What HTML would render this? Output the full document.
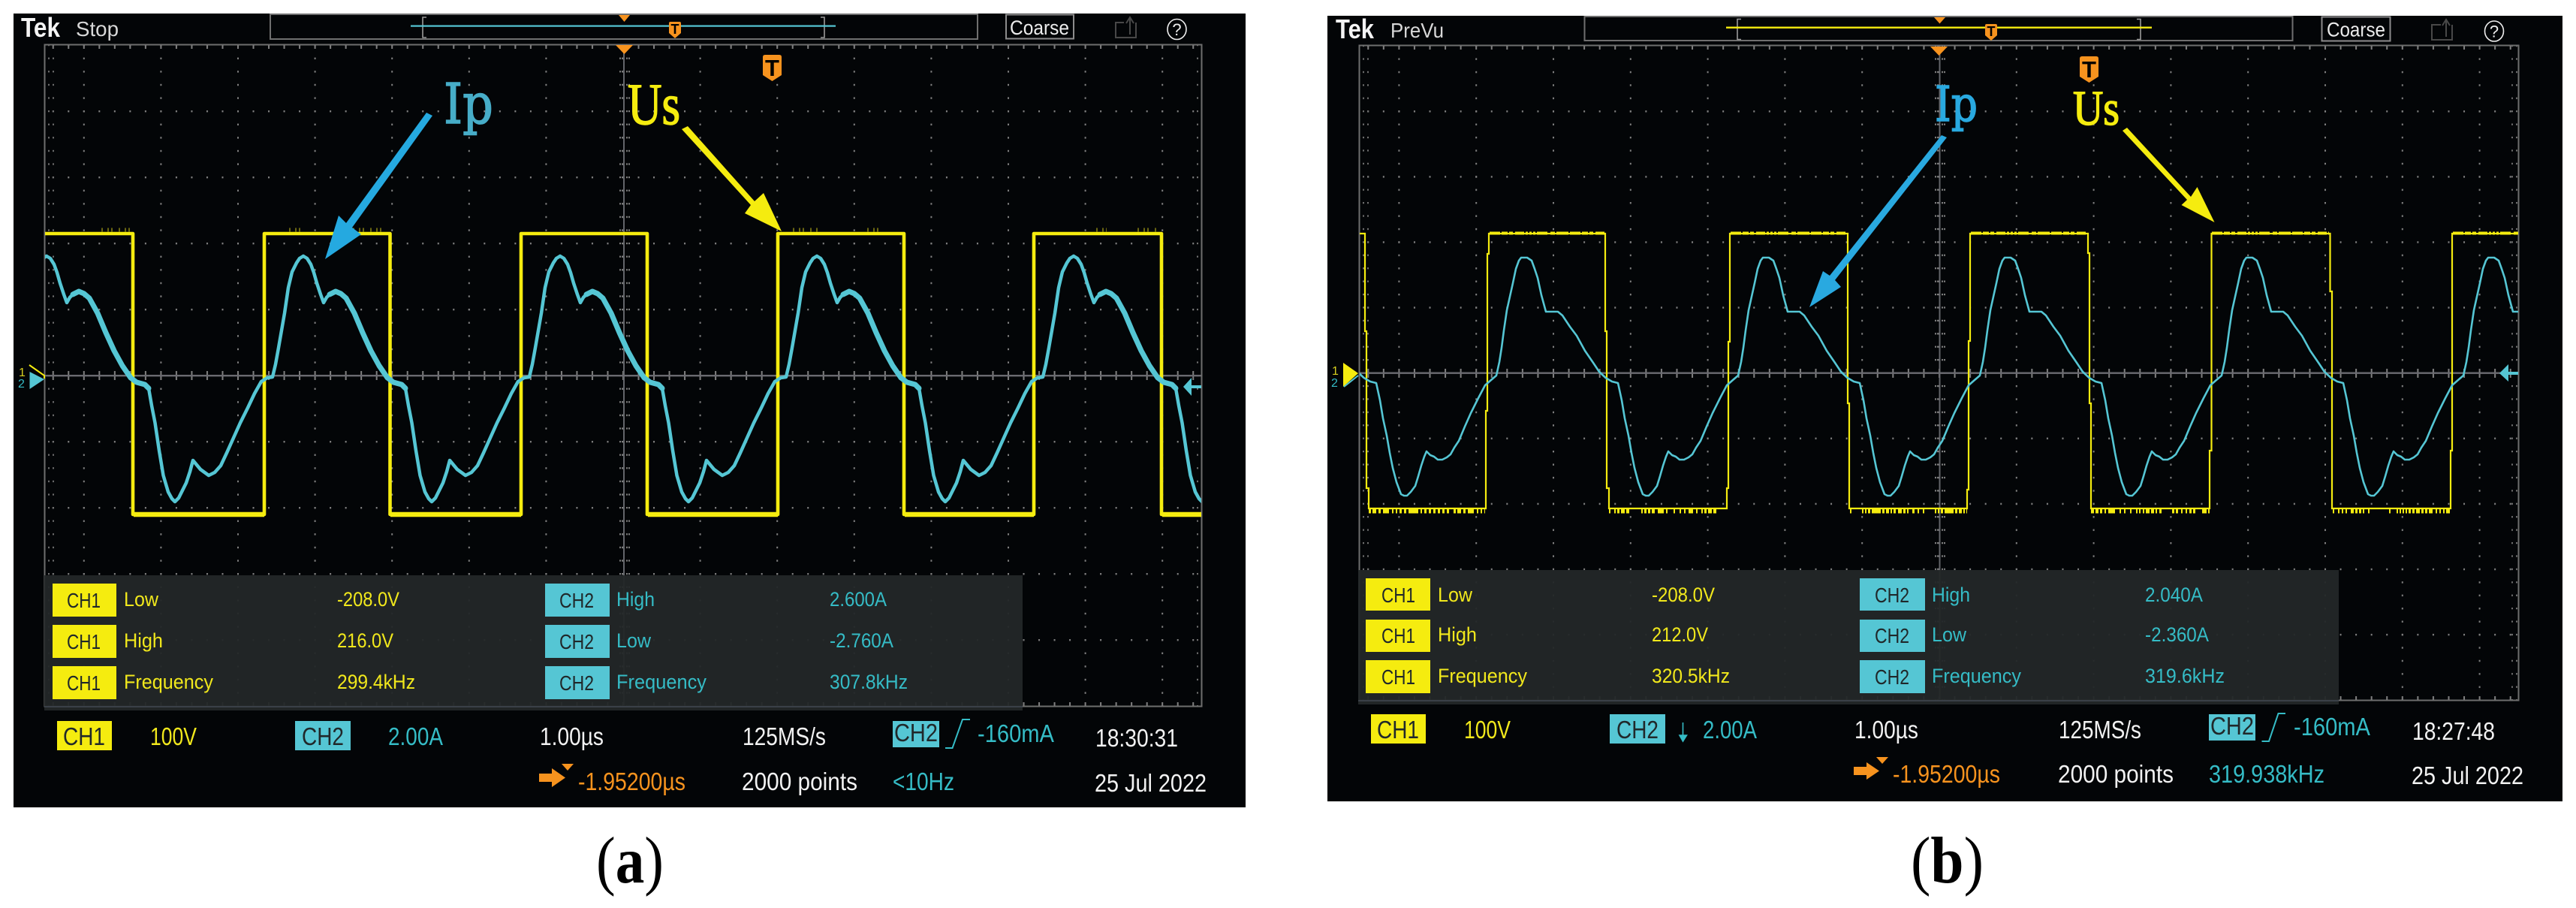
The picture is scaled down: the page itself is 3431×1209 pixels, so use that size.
<!DOCTYPE html>
<html>
<head>
<meta charset="utf-8">
<title>Oscilloscope waveforms</title>
<style>
html,body{margin:0;padding:0;background:#fff;}
svg{display:block;}
text{font-family:"Liberation Sans",sans-serif;}
.s{font-family:"Liberation Serif",serif;}
.y{fill:#f1e81c;} .t{fill:#35bcc6;} .w{fill:#f2f2f2;} .o{fill:#f7931e;} .k{fill:#20282a;}
.m{font-size:26.5px;} .b{font-size:28px;} .l{font-size:33px;}
</style>
</head>
<body>
<svg xmlns="http://www.w3.org/2000/svg" width="3431" height="1209" viewBox="0 0 3431 1209">
<defs>
<pattern id="la" patternUnits="userSpaceOnUse" x="829" y="59" width="102.6" height="17.6"><rect width="2" height="2.4" fill="#808080"/></pattern>
<pattern id="lb" patternUnits="userSpaceOnUse" x="829" y="59" width="20.52" height="88"><rect width="2" height="2.4" fill="#808080"/></pattern>
<pattern id="lc" patternUnits="userSpaceOnUse" x="64" y="59" width="30" height="17.6"><rect width="2" height="2.2" fill="#707070"/><rect x="6" width="2" height="2.2" fill="#707070"/></pattern>
<pattern id="ld" patternUnits="userSpaceOnUse" x="829" y="0" width="20.52" height="100"><rect width="2" height="100" fill="#808080"/></pattern>
<pattern id="le" patternUnits="userSpaceOnUse" x="825" y="59" width="30" height="17.6"><rect width="2" height="2.2" fill="#808080"/><rect x="3" width="2" height="2.2" fill="#808080"/><rect x="9" width="2" height="2.2" fill="#808080"/><rect x="12" width="2" height="2.2" fill="#808080"/></pattern>
<pattern id="ra" patternUnits="userSpaceOnUse" x="2582" y="60" width="102.8" height="17.42"><rect width="2" height="2.4" fill="#808080"/></pattern>
<pattern id="rb" patternUnits="userSpaceOnUse" x="2582" y="60" width="20.56" height="87.1"><rect width="2" height="2.4" fill="#808080"/></pattern>
<pattern id="rc" patternUnits="userSpaceOnUse" x="1815" y="60" width="30" height="17.42"><rect width="2" height="2.2" fill="#707070"/><rect x="6" width="2" height="2.2" fill="#707070"/></pattern>
<pattern id="rd" patternUnits="userSpaceOnUse" x="2582" y="0" width="20.56" height="100"><rect width="2" height="100" fill="#808080"/></pattern>
<pattern id="re" patternUnits="userSpaceOnUse" x="2577" y="60" width="30" height="17.42"><rect width="2" height="2.2" fill="#808080"/><rect x="3" width="2" height="2.2" fill="#808080"/><rect x="9" width="2" height="2.2" fill="#808080"/><rect x="12" width="2" height="2.2" fill="#808080"/></pattern>
<clipPath id="cl"><rect x="60" y="60" width="1540" height="880"/></clipPath>
<clipPath id="cr"><rect x="1811" y="61" width="1543" height="871"/></clipPath>
<polyline id="wl" fill="none" stroke="#55c6d4" stroke-width="4.5" stroke-linejoin="round" stroke-linecap="round" points="0,341 5,344 10,352 14,363 18,377 23,392 27,403 31,396 35,392 43,388 50,391 57,397 68,417 79,443 90,467 101,487 112,503 120,509 131,512 136,517 140,540 144.5,563 150,600 155.5,633 162,655 167,664 171,668 176,663 186,643 191,628 195,613 205,625 216,633 224,629 232,620 240,603 249,583 258,563 268,543 277,524 286,508 294,503 301,502 305,485 309,463 313,440 317,417 322,383 327,362 333,350 337,344 342,341"/>
<polyline id="wlt" fill="none" stroke="#55c6d4" stroke-width="7" stroke-linejoin="round" stroke-linecap="round" points="35,392 43,388 50,391 57,397 68,417 79,443 90,467 101,487 112,503 120,509 131,512 136,517"/>
<polyline id="wr" fill="none" stroke="#55c6d4" stroke-width="2.6" stroke-linejoin="round" points="0,343 5,343 11,347 15,358 19,370 24,393 30,415 46,415 52,420 62,435 71,447 82,467 93,483 101,495 109.5,503 118,508 126,510 131,533 135,557 140,580 144,603 148,623 153,642 159,658 163,660 167,660 172,655 178,647 182,634 186,620 190,608 193,601 198,606 203,608 208,612 214,612 220,609 225,605 230,596 236,587 244,568 252,550 262,530 271,513 279,506 286,500 290,482 293,463 296,440 300,413 304,395 308,377 312,358 316,347 319,343 322,343"/>
<g id="tb"><path d="M3 0H22Q25 0 25 3V27L12.5 35L0 27V3Q0 0 3 0Z" fill="#f7931e"/><text x="12.5" y="28" font-size="31" font-weight="bold" text-anchor="middle" fill="#000">T</text></g>
<g id="ts"><path d="M2 0H14Q16 0 16 2V15L8 22L0 15V2Q0 0 2 0Z" fill="#f7931e"/><text x="8" y="16" font-size="18" font-weight="bold" text-anchor="middle" fill="#000">T</text></g>
</defs>

<rect width="3431" height="1209" fill="#fff"/>

<!-- ================= LEFT PANEL ================= -->
<rect x="18" y="18" width="1641" height="1057" fill="#030507"/>
<rect x="60" y="60" width="1540" height="880" fill="url(#la)"/>
<rect x="60" y="60" width="1540" height="880" fill="url(#lb)"/>
<rect x="64" y="60" width="10" height="880" fill="url(#lc)"/>
<rect x="1591" y="60" width="8" height="880" fill="url(#lc)" transform="translate(0,0)"/>
<rect x="825" y="60" width="14" height="880" fill="url(#le)"/>
<rect x="60" y="60" width="1540" height="5" fill="url(#ld)"/>
<rect x="60" y="935" width="1540" height="5" fill="url(#ld)"/>
<rect x="60" y="494" width="1540" height="12" fill="url(#ld)"/>
<rect x="830" y="60" width="2" height="880" fill="#63656a"/>
<rect x="60" y="499" width="1540" height="2.4" fill="#6a6a70"/>
<rect x="59.5" y="59.5" width="1541" height="881" fill="none" stroke="#6e6e6e" stroke-width="2"/>

<!-- left waves -->
<g clip-path="url(#cl)">
<path d="M60 311H177V685H352V311H519.5V685H694V311H862V685H1036V311H1204V685H1377V311H1547V685H1600" fill="none" stroke="#f5ec0f" stroke-width="4.6" stroke-linejoin="round"/>
<path d="M178 685H352M520 685H694M863 685H1036M1205 685H1377M1548 685H1600" stroke="#f5ec0f" stroke-width="6.5" fill="none"/>
<path d="M135 306H175M385 306H400M470 306H515M1056 306H1090M1155 306H1172M1460 306H1474M1515 306H1545" stroke="#6a6610" stroke-width="5" stroke-dasharray="2 6 2 3 2 8" fill="none"/>
<use href="#wl" x="62"/><use href="#wl" x="-280"/><use href="#wl" x="404"/><use href="#wl" x="746"/><use href="#wl" x="1088"/><use href="#wl" x="1430"/>
<use href="#wlt" x="62"/><use href="#wlt" x="404"/><use href="#wlt" x="746"/><use href="#wlt" x="1088"/><use href="#wlt" x="1430"/>
</g>

<!-- left measurements -->
<rect x="59" y="766" width="1303" height="180" fill="#232728" fill-opacity=".95"/>
<rect x="59" y="940" width="1303" height="2" fill="#3a4048"/>

<g>
<rect x="70" y="777" width="85" height="44" fill="#f5ec0f"/><rect x="70" y="832" width="85" height="44" fill="#f5ec0f"/><rect x="70" y="887" width="85" height="44" fill="#f5ec0f"/>
<rect x="726" y="777" width="86" height="44" fill="#55c6d4"/><rect x="726" y="832" width="86" height="44" fill="#55c6d4"/><rect x="726" y="887" width="86" height="44" fill="#55c6d4"/>
<text class="b k" x="89" y="809" textLength="45" lengthAdjust="spacingAndGlyphs">CH1</text>
<text class="b k" x="89" y="864" textLength="45" lengthAdjust="spacingAndGlyphs">CH1</text>
<text class="b k" x="89" y="919" textLength="45" lengthAdjust="spacingAndGlyphs">CH1</text>
<text class="b k" x="745" y="809" textLength="46" lengthAdjust="spacingAndGlyphs">CH2</text>
<text class="b k" x="745" y="864" textLength="46" lengthAdjust="spacingAndGlyphs">CH2</text>
<text class="b k" x="745" y="919" textLength="46" lengthAdjust="spacingAndGlyphs">CH2</text>
<text class="m y" x="165" y="807" textLength="46" lengthAdjust="spacingAndGlyphs">Low</text>
<text class="m y" x="165" y="862" textLength="52" lengthAdjust="spacingAndGlyphs">High</text>
<text class="m y" x="165" y="917" textLength="119" lengthAdjust="spacingAndGlyphs">Frequency</text>
<text class="m y" x="449" y="807" textLength="83" lengthAdjust="spacingAndGlyphs">-208.0V</text>
<text class="m y" x="449" y="862" textLength="75" lengthAdjust="spacingAndGlyphs">216.0V</text>
<text class="m y" x="449" y="917" textLength="104" lengthAdjust="spacingAndGlyphs">299.4kHz</text>
<text class="m t" x="821" y="807" textLength="51" lengthAdjust="spacingAndGlyphs">High</text>
<text class="m t" x="821" y="862" textLength="46" lengthAdjust="spacingAndGlyphs">Low</text>
<text class="m t" x="821" y="917" textLength="120" lengthAdjust="spacingAndGlyphs">Frequency</text>
<text class="m t" x="1105" y="807" textLength="76" lengthAdjust="spacingAndGlyphs">2.600A</text>
<text class="m t" x="1105" y="862" textLength="85" lengthAdjust="spacingAndGlyphs">-2.760A</text>
<text class="m t" x="1105" y="917" textLength="104" lengthAdjust="spacingAndGlyphs">307.8kHz</text>
</g>

<!-- left header -->
<text x="28" y="49" font-size="36" font-weight="bold" fill="#f4f4f4" textLength="52" lengthAdjust="spacingAndGlyphs">Tek</text>
<text x="101" y="48" font-size="28" fill="#d8d8d8" textLength="57" lengthAdjust="spacingAndGlyphs">Stop</text>
<rect x="360" y="19" width="942" height="33" fill="none" stroke="#6f6f6f" stroke-width="2"/>
<path d="M568 23H563V50H568M1093 23H1098V50H1093" fill="none" stroke="#9a9a9a" stroke-width="1.6"/>
<rect x="547" y="33.5" width="566" height="2.2" fill="#55c6d4"/>
<path d="M824 20H839L831.5 29Z" fill="#f7931e"/>
<use href="#ts" x="891" y="29"/>
<rect x="1340" y="19.5" width="90" height="32" fill="none" stroke="#8c8c8c" stroke-width="2"/>
<text x="1345" y="46" font-size="27" fill="#ececec" textLength="79" lengthAdjust="spacingAndGlyphs">Coarse</text>
<path d="M1497 30H1486V50H1513V30M1505 46V25M1500 31L1505 23L1510 31" fill="none" stroke="#484848" stroke-width="2"/>
<ellipse cx="1567.5" cy="39" rx="12.5" ry="13.5" fill="none" stroke="#eee" stroke-width="1.6"/>
<text x="1567.5" y="47" font-size="22" fill="#eee" text-anchor="middle">?</text>
<path d="M820 60H843L831.5 72Z" fill="#f7931e"/>
<use href="#tb" x="1016" y="73"/>

<!-- left annotations -->
<text class="s" x="591" y="164" font-size="74" fill="#47adc8" stroke="#47adc8" stroke-width="1.5" textLength="66" lengthAdjust="spacingAndGlyphs" style="font-family:'DejaVu Serif',serif;">Ip</text>
<text class="s" x="836" y="165" font-size="78" fill="#f5ec0f" stroke="#f5ec0f" stroke-width="1.5" textLength="70" lengthAdjust="spacingAndGlyphs">Us</text>
<path d="M568 150L576 154L469 303L481 312L433 345L451 287L461 297Z" fill="#25a9e0"/>
<path d="M908 172L916 168L1005 268L1017 257L1041 308L992 284L1000 273Z" fill="#f5ec0f"/>

<!-- left channel markers -->
<path d="M39 486L59 500V504" fill="none" stroke="#f5ec0f" stroke-width="2"/>
<path d="M39.5 495L59 505L39.5 518Z" fill="#55c6d4"/>
<text x="25" y="501" font-size="16" fill="#d8d020">1</text>
<text x="24" y="516" font-size="16" fill="#35bcc6">2</text>
<path d="M1576 515L1587 503V513H1600V517H1587V527Z" fill="#55c6d4"/>

<!-- left status bar -->
<rect x="76" y="960" width="73" height="39" fill="#f5ec0f"/>
<text class="l k" x="84" y="992" textLength="56" lengthAdjust="spacingAndGlyphs">CH1</text>
<text class="l y" x="200" y="992" textLength="62" lengthAdjust="spacingAndGlyphs">100V</text>
<rect x="393" y="960" width="74" height="39" fill="#55c6d4"/>
<text class="l k" x="402" y="992" textLength="56" lengthAdjust="spacingAndGlyphs">CH2</text>
<text class="l t" x="517" y="992" textLength="73" lengthAdjust="spacingAndGlyphs">2.00A</text>
<text class="l w" x="719" y="992" textLength="85" lengthAdjust="spacingAndGlyphs">1.00µs</text>
<path d="M718 1030H735V1023L753 1035.5L735 1048V1041H718Z" fill="#f7931e"/>
<path d="M748 1017H764L756 1026Z" fill="#f7931e"/>
<text class="l o" x="770" y="1052" textLength="143" lengthAdjust="spacingAndGlyphs">-1.95200µs</text>
<text class="l w" x="989" y="992" textLength="111" lengthAdjust="spacingAndGlyphs">125MS/s</text>
<text class="l w" x="988" y="1052" textLength="154" lengthAdjust="spacingAndGlyphs">2000 points</text>
<rect x="1189" y="960" width="62" height="35" fill="#55c6d4"/>
<text class="l k" x="1191" y="987" textLength="58" lengthAdjust="spacingAndGlyphs">CH2</text>
<path d="M1259 996H1268.5L1282 958H1292" fill="none" stroke="#35bcc6" stroke-width="2"/>
<text class="l t" x="1302" y="988" textLength="102" lengthAdjust="spacingAndGlyphs">-160mA</text>
<text class="l t" x="1189" y="1052" textLength="82" lengthAdjust="spacingAndGlyphs">&lt;10Hz</text>
<text class="l w" x="1459" y="994" textLength="110" lengthAdjust="spacingAndGlyphs">18:30:31</text>
<text class="l w" x="1458" y="1054" textLength="149" lengthAdjust="spacingAndGlyphs">25 Jul 2022</text>

<!-- ================= RIGHT PANEL ================= -->
<rect x="1768" y="21" width="1645" height="1046" fill="#030507"/>
<rect x="1811" y="61" width="1543" height="871" fill="url(#ra)"/>
<rect x="1811" y="61" width="1543" height="871" fill="url(#rb)"/>
<rect x="1815" y="61" width="10" height="871" fill="url(#rc)"/>
<rect x="3345" y="61" width="8" height="871" fill="url(#rc)"/>
<rect x="2577" y="61" width="14" height="871" fill="url(#re)"/>
<rect x="1811" y="61" width="1543" height="5" fill="url(#rd)"/>
<rect x="1811" y="927" width="1543" height="5" fill="url(#rd)"/>
<rect x="1811" y="491" width="1543" height="12" fill="url(#rd)"/>
<rect x="2582.5" y="61" width="2" height="871" fill="#63656a"/>
<rect x="1811" y="495.5" width="1543" height="2.4" fill="#6a6a70"/>
<rect x="1810.5" y="60.5" width="1544" height="872" fill="none" stroke="#6e6e6e" stroke-width="2"/>

<g clip-path="url(#cr)">
<polyline fill="none" stroke="#f5ec0f" stroke-width="2.2" points="1811,311 1818,311 1818,441 1820,441 1820,650 1823,650 1823,677 1979,677 1979,547 1981,547 1981,338 1983,338 1983,311 2138,311 2138,441 2140,441 2140,650 2143,650 2143,677 2300,677 2300,650 2302,650 2302,455 2304,455 2304,311 2461,311 2461,537 2463,537 2463,677 2620,677 2620,652 2622,652 2622,454 2624,454 2624,311 2781,311 2781,337 2783,337 2783,537 2785,537 2785,677 2943,677 2943,600 2945.5,600 2945.5,311 3103.5,311 3103.5,388 3106,388 3106,677 3264,677 3264,600 3266,600 3266,311 3354,311"/>
<g fill="none" stroke="#f5ec0f">
<path d="M1984 310.5H2137M2305 310.5H2460M2625 310.5H2780M2946 310.5H3102M3267 310.5H3354" stroke-width="4" stroke-dasharray="14 2 8 2 5 3 12 2 3 2 3 2 3 2 14 4 6 2 16 2"/>
<path d="M1823 680.5H1978" stroke-width="6" stroke-dasharray="3 2 5 3 3 3 8 4 2 3 2 3 3 3 3 3 13 3 2 3 3 3 3 3 3 3 3 3 3 3 3 6"/>
<path d="M2143 680.5H2300" stroke-width="6" stroke-dasharray="2 5 2 2 3 2 5 2 4 16 2 2 3 2 3 2 4 4 8 3 2 8 2 6 2 4 2 4 6 4"/>
<path d="M2464 680.5H2620" stroke-width="6" stroke-dasharray="2 14 2 2 2 2 3 2 12 2 3 2 4 2 2 2 3 3 5 2 3 2 2 5 3 4 2 5"/>
<path d="M2785 680.5H2943" stroke-width="6" stroke-dasharray="4 2 4 2 3 3 2 3 9 6 2 4 2 6 2 6 2 2 2 3 2 2 5 2 4 2 2 3 3 14 3 2 3"/>
<path d="M3107 680.5H3264" stroke-width="6" stroke-dasharray="2 5 2 3 2 3 2 5 4 2 3 2 3 2 2 5 2 26 2 8 2 2 2 2 2 2 2 2 3 2 3"/>
</g>
<use href="#wr" x="1707"/><use href="#wr" x="2029"/><use href="#wr" x="2351"/><use href="#wr" x="2673"/><use href="#wr" x="2995"/><use href="#wr" x="3317"/>
</g>

<!-- right measurements -->
<rect x="1809" y="759" width="1306" height="179" fill="#232728" fill-opacity=".95"/>
<rect x="1809" y="932" width="1306" height="2" fill="#3a4048"/>

<g>
<rect x="1819" y="770" width="86" height="43" fill="#f5ec0f"/><rect x="1819" y="825" width="86" height="43" fill="#f5ec0f"/><rect x="1819" y="879" width="86" height="44" fill="#f5ec0f"/>
<rect x="2477" y="770" width="87" height="43" fill="#55c6d4"/><rect x="2477" y="825" width="87" height="43" fill="#55c6d4"/><rect x="2477" y="879" width="87" height="44" fill="#55c6d4"/>
<text class="b k" x="1840" y="802" textLength="45" lengthAdjust="spacingAndGlyphs">CH1</text>
<text class="b k" x="1840" y="856" textLength="45" lengthAdjust="spacingAndGlyphs">CH1</text>
<text class="b k" x="1840" y="911" textLength="45" lengthAdjust="spacingAndGlyphs">CH1</text>
<text class="b k" x="2497" y="802" textLength="46" lengthAdjust="spacingAndGlyphs">CH2</text>
<text class="b k" x="2497" y="856" textLength="46" lengthAdjust="spacingAndGlyphs">CH2</text>
<text class="b k" x="2497" y="911" textLength="46" lengthAdjust="spacingAndGlyphs">CH2</text>
<text class="m y" x="1915" y="801" textLength="46" lengthAdjust="spacingAndGlyphs">Low</text>
<text class="m y" x="1915" y="854" textLength="52" lengthAdjust="spacingAndGlyphs">High</text>
<text class="m y" x="1915" y="909" textLength="119" lengthAdjust="spacingAndGlyphs">Frequency</text>
<text class="m y" x="2200" y="801" textLength="84" lengthAdjust="spacingAndGlyphs">-208.0V</text>
<text class="m y" x="2200" y="854" textLength="75" lengthAdjust="spacingAndGlyphs">212.0V</text>
<text class="m y" x="2200" y="909" textLength="104" lengthAdjust="spacingAndGlyphs">320.5kHz</text>
<text class="m t" x="2573" y="801" textLength="51" lengthAdjust="spacingAndGlyphs">High</text>
<text class="m t" x="2573" y="854" textLength="46" lengthAdjust="spacingAndGlyphs">Low</text>
<text class="m t" x="2573" y="909" textLength="119" lengthAdjust="spacingAndGlyphs">Frequency</text>
<text class="m t" x="2857" y="801" textLength="77" lengthAdjust="spacingAndGlyphs">2.040A</text>
<text class="m t" x="2857" y="854" textLength="85" lengthAdjust="spacingAndGlyphs">-2.360A</text>
<text class="m t" x="2857" y="909" textLength="106" lengthAdjust="spacingAndGlyphs">319.6kHz</text>
</g>

<!-- right header -->
<text x="1779" y="51" font-size="36" font-weight="bold" fill="#f4f4f4" textLength="51" lengthAdjust="spacingAndGlyphs">Tek</text>
<text x="1852" y="50" font-size="28" fill="#d8d8d8" textLength="71" lengthAdjust="spacingAndGlyphs">PreVu</text>
<rect x="2110.5" y="22" width="943" height="32" fill="none" stroke="#6f6f6f" stroke-width="2"/>
<path d="M2319 25.5H2314V52.5H2319M2846 25.5H2851V52.5H2846" fill="none" stroke="#9a9a9a" stroke-width="1.6"/>
<rect x="2299" y="35.5" width="567" height="2.4" fill="#f5ec0f"/>
<path d="M2576 23H2591L2583.5 31.5Z" fill="#f7931e"/>
<use href="#ts" x="2644" y="32"/>
<rect x="3092.5" y="22.5" width="91" height="32" fill="none" stroke="#8c8c8c" stroke-width="2"/>
<text x="3099" y="48.5" font-size="27" fill="#ececec" textLength="78" lengthAdjust="spacingAndGlyphs">Coarse</text>
<path d="M3251 33H3239V53H3266V33M3258 49V28M3253 34L3258 26L3263 34" fill="none" stroke="#484848" stroke-width="2"/>
<ellipse cx="3322" cy="41.5" rx="12.5" ry="13.5" fill="none" stroke="#eee" stroke-width="1.6"/>
<text x="3322" y="49.5" font-size="22" fill="#eee" text-anchor="middle">?</text>
<path d="M2571 62H2594L2582.5 74Z" fill="#f7931e"/>
<use href="#tb" x="2770" y="75"/>

<!-- right annotations -->
<text class="s" x="2577" y="161" font-size="65" fill="#29a9e0" stroke="#29a9e0" stroke-width="1.5" textLength="57" lengthAdjust="spacingAndGlyphs" style="font-family:'DejaVu Serif',serif;">Ip</text>
<text class="s" x="2761" y="166" font-size="66" fill="#f5ec0f" stroke="#f5ec0f" stroke-width="1.5" textLength="62" lengthAdjust="spacingAndGlyphs">Us</text>
<path d="M2586 180L2593 183L2444 373L2452 382L2410 409L2428 361L2437 367Z" fill="#29a9e0"/>
<path d="M2827 174L2833 170L2918 262L2926.5 249L2949.5 296L2905.5 273L2913 266Z" fill="#f5ec0f"/>

<!-- right channel markers -->
<path d="M1789 483L1809 497L1789 515Z" fill="#f5ec0f"/>
<path d="M1790 515L1809 500" fill="none" stroke="#55c6d4" stroke-width="2"/>
<text x="1774" y="499" font-size="16" fill="#d8d020">1</text>
<text x="1773" y="515" font-size="16" fill="#35bcc6">2</text>
<path d="M3329 497L3341 485V495H3354V499H3341V508Z" fill="#55c6d4"/>

<!-- right status bar -->
<rect x="1826" y="951" width="73" height="39" fill="#f5ec0f"/>
<text class="l k" x="1834" y="983" textLength="56" lengthAdjust="spacingAndGlyphs">CH1</text>
<text class="l y" x="1950" y="983" textLength="62" lengthAdjust="spacingAndGlyphs">100V</text>
<rect x="2144" y="951" width="74" height="39" fill="#55c6d4"/>
<text class="l k" x="2153" y="983" textLength="56" lengthAdjust="spacingAndGlyphs">CH2</text>
<path d="M2241.5 962V982M2237 979H2246.5L2241.5 987Z" fill="#35bcc6" stroke="#35bcc6" stroke-width="1.6"/>
<text class="l t" x="2268" y="983" textLength="72" lengthAdjust="spacingAndGlyphs">2.00A</text>
<text class="l w" x="2470" y="983" textLength="85" lengthAdjust="spacingAndGlyphs">1.00µs</text>
<path d="M2469 1021H2486V1015L2503 1026.5L2486 1038V1032H2469Z" fill="#f7931e"/>
<path d="M2499 1008H2515L2507 1017Z" fill="#f7931e"/>
<text class="l o" x="2521" y="1042" textLength="143" lengthAdjust="spacingAndGlyphs">-1.95200µs</text>
<text class="l w" x="2742" y="983" textLength="110" lengthAdjust="spacingAndGlyphs">125MS/s</text>
<text class="l w" x="2741" y="1042" textLength="154" lengthAdjust="spacingAndGlyphs">2000 points</text>
<rect x="2942" y="951" width="62" height="35" fill="#55c6d4"/>
<text class="l k" x="2944" y="978" textLength="58" lengthAdjust="spacingAndGlyphs">CH2</text>
<path d="M3012.5 987H3022L3034.5 950H3044" fill="none" stroke="#35bcc6" stroke-width="2"/>
<text class="l t" x="3055" y="979" textLength="102" lengthAdjust="spacingAndGlyphs">-160mA</text>
<text class="l t" x="2942" y="1042" textLength="154" lengthAdjust="spacingAndGlyphs">319.938kHz</text>
<text class="l w" x="3213" y="985" textLength="110" lengthAdjust="spacingAndGlyphs">18:27:48</text>
<text class="l w" x="3212" y="1044" textLength="149" lengthAdjust="spacingAndGlyphs">25 Jul 2022</text>

<!-- captions -->
<text class="s" x="794" y="1175" font-size="88" fill="#000" textLength="90" lengthAdjust="spacingAndGlyphs">(<tspan font-weight="bold">a</tspan>)</text>
<text class="s" x="2545" y="1175" font-size="88" fill="#000" textLength="97" lengthAdjust="spacingAndGlyphs">(<tspan font-weight="bold">b</tspan>)</text>
</svg>
</body>
</html>
